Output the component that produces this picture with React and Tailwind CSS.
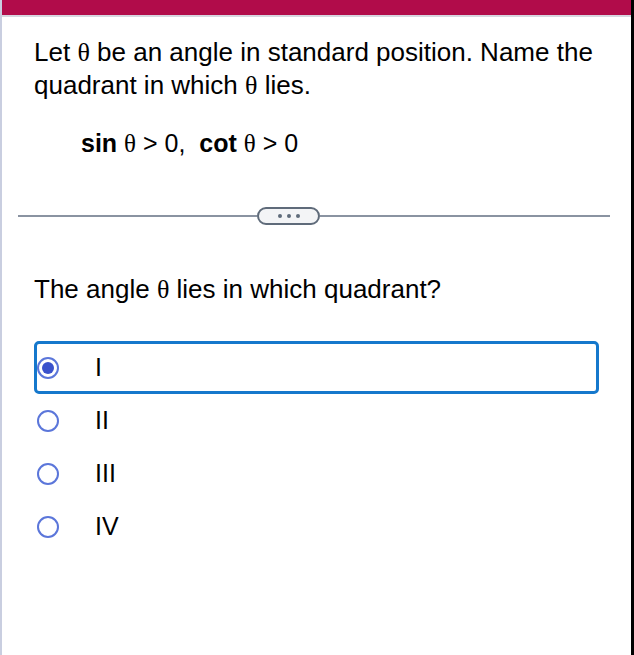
const OPTIONS = ['I', 'II', 'III', 'IV'];

function Theta() {
  return <span style={{ fontFamily: '"Liberation Serif", serif' }}>θ</span>;
}

function Radio({ checked }) {
  return (
    <span className="w-[22px] h-[22px] rounded-full border-[2.5px] border-[#5b76da] flex items-center justify-center bg-white shrink-0">
      {checked && <span className="w-[12px] h-[12px] rounded-full bg-[#3a52cc]" />}
    </span>
  );
}

export default function App() {
  const selected = 0;
  return (
    <div className="w-[634px] h-[655px] flex bg-white overflow-hidden" style={{ fontFamily: '"Liberation Sans", Arial, sans-serif' }}>
      <div className="flex-1 flex flex-col border-l-2 border-[#c9cee0]">
        <div className="h-[15px] bg-[#b10c4a] shrink-0" />
        <div className="h-[2px] bg-[#d6d6df] shrink-0" />
        <div className="flex-1 flex flex-col">
          <p className="pl-[32px] pr-2 pt-[19px] text-[26px] leading-[33px] text-black">
            Let <Theta /> be an angle in standard position. Name the quadrant in which <Theta /> lies.
          </p>
          <p className="pl-[79px] mt-[25px] text-[25px] leading-[33px] text-black whitespace-pre">
            <span className="font-bold">sin</span> <Theta /> &gt; 0,{'  '}<span className="font-bold">cot</span> <Theta /> &gt; 0
          </p>
          <div className="flex items-center mt-[47px] pl-[16px] pr-[21px]">
            <div className="w-[239px] h-[2px] bg-[#8a93a1]" />
            <div className="w-[63px] h-[18px] rounded-full border-2 border-[#5f6b7a] bg-[#f3f4f6] flex items-center justify-center gap-[5px]">
              <span className="w-[4px] h-[4px] rounded-full bg-[#5f6b7a]" />
              <span className="w-[4px] h-[4px] rounded-full bg-[#5f6b7a]" />
              <span className="w-[4px] h-[4px] rounded-full bg-[#5f6b7a]" />
            </div>
            <div className="flex-1 h-[2px] bg-[#8a93a1]" />
          </div>
          <p className="pl-[32px] mt-[48px] text-[26px] leading-[33px] text-black">
            The angle <Theta /> lies in which quadrant?
          </p>
          <div className="flex flex-col mt-[35px] pl-[32px] pr-[32px]">
            {OPTIONS.map((opt, i) => (
              <div
                key={opt}
                className={`h-[53px] flex items-center gap-[36px] pl-0 rounded-[5px] border-[3px] ${
                  i === selected ? 'border-[#1578cc]' : 'border-transparent'
                }`}
              >
                <Radio checked={i === selected} />
                <span className="text-[25px] text-black">{opt}</span>
              </div>
            ))}
          </div>
        </div>
      </div>
      <div className="w-[3px] bg-black shrink-0" />
    </div>
  );
}
